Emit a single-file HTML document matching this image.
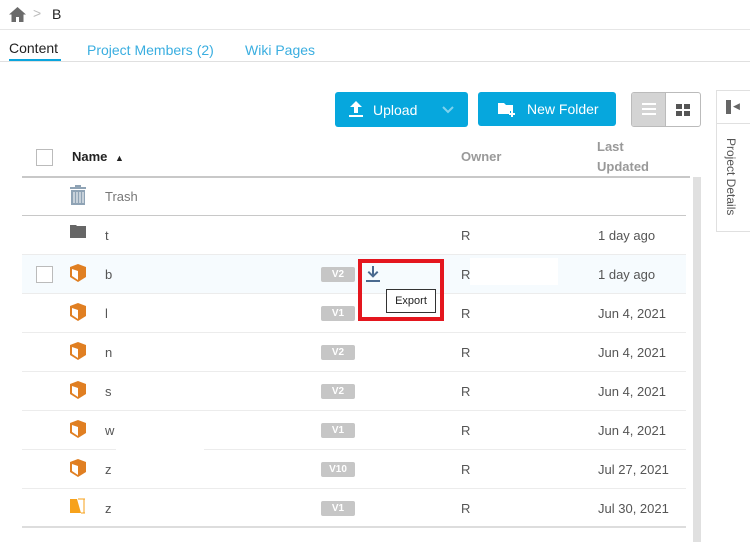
<!DOCTYPE html>
<html><head><style>
*{margin:0;padding:0;box-sizing:border-box}
body{width:750px;height:542px;background:#fff;font-family:"Liberation Sans",sans-serif;position:relative;overflow:hidden;color:#3c3c3c}
.a{position:absolute}
.row{position:absolute;left:22px;width:664px;height:39px;border-bottom:1px solid #ececec;font-size:13px}
.row .n{position:absolute;left:83px;top:12px;color:#555}
.row .o{position:absolute;left:439px;top:12px;color:#555}
.row .d{position:absolute;left:576px;top:12px;color:#555}
.row .v{position:absolute;left:299px;top:12px;width:34px;height:15px;background:#c6c6c6;border-radius:2px;color:#fff;font-size:10px;font-weight:bold;text-align:center;line-height:15px}
.row .ic{position:absolute;left:48px;top:9px}
.cb{position:absolute;width:17px;height:17px;border:1px solid #bbb;background:#fff}
</style></head><body>
<svg class="a" style="left:9px;top:7px" width="17" height="15" viewBox="0 0 17 15"><path d="M8.5 0L0 7.5h2.5V15h4.5v-5h3v5h4.5V7.5H17z" fill="#6b6b6b"/></svg>
<div class="a" style="left:33px;top:5px;color:#bbb;font-size:14px">&gt;</div>
<div class="a" style="left:52px;top:6px;font-size:14px;color:#222">B</div>
<div class="a" style="left:0;top:29px;width:750px;height:1px;background:#e6e6e6"></div>
<div class="a" style="left:9px;top:40px;font-size:14px;color:#222">Content</div>
<div class="a" style="left:9px;top:59px;width:52px;height:2px;background:#0aa5dd"></div>
<div class="a" style="left:87px;top:42px;font-size:14px;color:#3aaee0">Project Members (2)</div>
<div class="a" style="left:245px;top:42px;font-size:14px;color:#3aaee0">Wiki Pages</div>
<div class="a" style="left:0;top:61px;width:750px;height:1px;background:#e0e0e0"></div>

<div class="a" style="left:335px;top:92px;width:133px;height:35px;background:#06a7dd;border-radius:3px;color:#fff;font-size:14px">
<svg class="a" style="left:14px;top:9px" width="14" height="16" viewBox="0 0 14 16"><path d="M7 0L1 6h4v6h4V6h4z M0 14h14v2H0z" fill="#fff"/></svg>
<span class="a" style="left:38px;top:10px">Upload</span>
<svg class="a" style="left:107px;top:14px" width="12" height="8" viewBox="0 0 12 8"><path d="M1 1l5 5 5-5" stroke="#7fd2ee" stroke-width="2" fill="none"/></svg></div>
<div class="a" style="left:478px;top:92px;width:138px;height:34px;background:#06a7dd;border-radius:3px;color:#fff;font-size:14px">
<svg class="a" style="left:20px;top:10px" width="18" height="15" viewBox="0 0 18 15"><path d="M0 1h6l2 2h7v6h-3v3H0z" fill="#fff"/><path d="M13 9h2v2h2v2h-2v2h-2v-2h-2v-2h2z" fill="#fff"/></svg>
<span class="a" style="left:49px;top:9px">New Folder</span></div>
<div class="a" style="left:631px;top:92px;width:70px;height:35px;border:1px solid #bbb;border-radius:3px;background:#fff;overflow:hidden">
<div class="a" style="left:0;top:0;width:34px;height:33px;background:#d4d4d4;border-right:1px solid #bbb"></div>
<div class="a" style="left:10px;top:10px;width:14px;height:2px;background:#fff;box-shadow:0 5px 0 #fff,0 10px 0 #fff"></div>
<div class="a" style="left:44px;top:11px;width:6px;height:5px;background:#555;box-shadow:8px 0 0 #555,0 7px 0 #555,8px 7px 0 #555"></div>
</div>
<div class="a" style="left:716px;top:90px;width:40px;height:142px;border:1px solid #e0e0e0;background:#fff">
<div class="a" style="left:0;top:32px;width:40px;height:1px;background:#e0e0e0"></div>
<div class="a" style="left:9px;top:9px;width:5px;height:14px;background:#666"></div>
<div class="a" style="left:16px;top:10px;font-size:9px;color:#666">&#9664;</div>
<div class="a" style="left:7px;top:47px;writing-mode:vertical-rl;font-size:12px;color:#555">Project Details</div>
</div>

<div class="cb" style="left:36px;top:149px"></div>
<div class="a" style="left:72px;top:149px;font-size:13px;font-weight:bold;color:#222">Name <span style="font-size:9px;margin-left:4px">&#9650;</span></div>
<div class="a" style="left:461px;top:149px;font-size:13px;color:#999;font-weight:bold">Owner</div>
<div class="a" style="left:597px;top:137px;font-size:13px;color:#999;font-weight:bold;line-height:20px">Last<br>Updated</div>
<div class="a" style="left:22px;top:176px;width:668px;height:2px;background:#c8c8c8"></div>
<div class="a" style="left:693px;top:177px;width:8px;height:365px;background:#e0e0e0"></div>

<div class="row" style="top:177px;border-bottom:1px solid #c8c8c8">
<svg class="ic" width="16" height="20" viewBox="0 0 16 20" style="top:8px"><rect x="5" y="0" width="6" height="2" fill="#8fa3b5"/><rect x="0" y="2" width="16" height="2" fill="#8fa3b5"/><rect x="1" y="5" width="14" height="15" fill="#8fa3b5"/><path d="M4 7v11M7 7v11M10 7v11M13 7v11" stroke="#fff" stroke-width="1"/></svg>
<span class="n" style="color:#777">Trash</span></div>
<div class="row" style="top:216px"><svg class="ic" width="16" height="13" viewBox="0 0 16 13"><path d="M0 0h6l1 1h9v12H0z" fill="#666"/></svg><span class="n">t</span><span class="o">R</span><span class="d">1 day ago</span></div>
<div class="row" style="top:255px;background:#f6fbfe"><div class="cb" style="left:14px;top:11px"></div>
<svg class="ic" width="16" height="18" viewBox="0 0 16 18"><path d="M8 0L16 3v10l-8 5-8-5V3z" fill="#e07f22"/><path d="M2 5l6 2v9l-6-4z" fill="#fff"/></svg>
<span class="n">b</span><span class="v">V2</span>
<svg class="a" style="left:344px;top:11px" width="14" height="16" viewBox="0 0 14 16"><path d="M6 0h2v8l3-3 1.4 1.4L7 11.8 1.6 6.4 3 5l3 3z M0 14h14v2H0z" fill="#4a6a8f"/></svg>
<span class="o">R</span><div class="a" style="left:448px;top:3px;width:88px;height:27px;background:#fff"></div><span class="d">1 day ago</span></div>
<div class="row" style="top:294px"><svg class="ic" width="16" height="18" viewBox="0 0 16 18"><path d="M8 0L16 3v10l-8 5-8-5V3z" fill="#e07f22"/><path d="M2 5l6 2v9l-6-4z" fill="#fff"/></svg><span class="n">l</span><span class="v">V1</span><span class="o">R</span><span class="d">Jun 4, 2021</span></div>
<div class="row" style="top:333px"><svg class="ic" width="16" height="18" viewBox="0 0 16 18"><path d="M8 0L16 3v10l-8 5-8-5V3z" fill="#e07f22"/><path d="M2 5l6 2v9l-6-4z" fill="#fff"/></svg><span class="n">n</span><span class="v">V2</span><span class="o">R</span><span class="d">Jun 4, 2021</span></div>
<div class="row" style="top:372px"><svg class="ic" width="16" height="18" viewBox="0 0 16 18"><path d="M8 0L16 3v10l-8 5-8-5V3z" fill="#e07f22"/><path d="M2 5l6 2v9l-6-4z" fill="#fff"/></svg><span class="n">s</span><span class="v">V2</span><span class="o">R</span><span class="d">Jun 4, 2021</span></div>
<div class="row" style="top:411px"><svg class="ic" width="16" height="18" viewBox="0 0 16 18"><path d="M8 0L16 3v10l-8 5-8-5V3z" fill="#e07f22"/><path d="M2 5l6 2v9l-6-4z" fill="#fff"/></svg><span class="n">w</span><span class="v">V1</span><span class="o">R</span><span class="d">Jun 4, 2021</span></div>
<div class="row" style="top:450px"><svg class="ic" width="16" height="18" viewBox="0 0 16 18"><path d="M8 0L16 3v10l-8 5-8-5V3z" fill="#e07f22"/><path d="M2 5l6 2v9l-6-4z" fill="#fff"/></svg><span class="n">z</span><span class="v">V10</span><span class="o">R</span><span class="d">Jul 27, 2021</span></div>
<div class="row" style="top:489px;border-bottom:2px solid #ddd"><svg class="ic" width="16" height="18" viewBox="0 0 16 18"><path d="M0 1h7l4 14H0z" fill="#f7a21b"/><path d="M8 1h7M14 1v14M11 15h4" stroke="#f7a21b" stroke-width="1"/></svg><span class="n">z</span><span class="v">V1</span><span class="o">R</span><span class="d">Jul 30, 2021</span></div>
<div class="a" style="left:116px;top:449px;width:88px;height:2px;background:#fff"></div>

<div class="a" style="left:358px;top:259px;width:86px;height:62px;border:4px solid #e4161e"></div>
<div class="a" style="left:386px;top:289px;width:50px;height:24px;border:1px solid #333;background:#fff;font-size:11px;color:#222;text-align:center;line-height:22px">Export</div>
</body></html>
